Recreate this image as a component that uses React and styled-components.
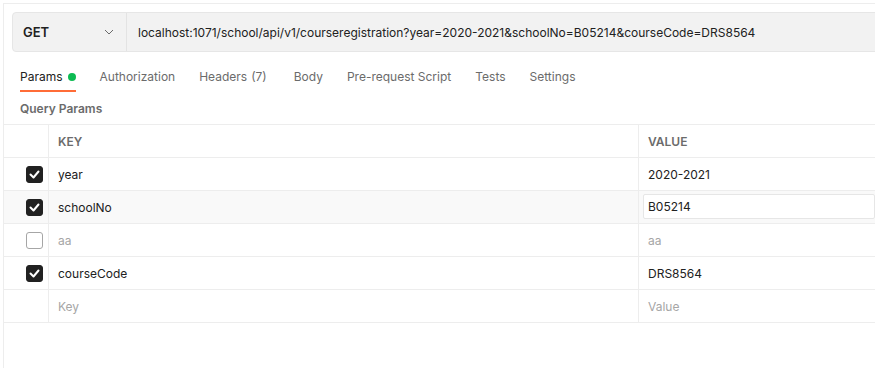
import React from "react";
import styled, { createGlobalStyle } from "styled-components";

const GlobalStyle = createGlobalStyle`
  html, body {
    margin: 0;
    padding: 0;
    background: #ffffff;
    overflow: hidden;
  }
  body {
    font-family: Inter, "Noto Sans", "Liberation Sans", sans-serif;
    color: #212121;
  }
`;

const Page = styled.div`
  padding: 3px 0 0 3px;
  height: 365px;
`;

const Panel = styled.div`
  border-top: 1px solid #ededed;
  border-left: 1px solid #ededed;
  height: 100%;
  box-sizing: border-box;
`;

const UrlRow = styled.div`
  padding: 8px 0 0 8px;
`;

const UrlBar = styled.div`
  display: flex;
  height: 40px;
  margin-right: -20px;
  background: #f2f2f2;
  border: 1px solid #e6e6e6;
  border-radius: 4px;
  box-sizing: border-box;
`;

const Method = styled.div`
  width: 114px;
  display: flex;
  align-items: center;
  justify-content: space-between;
  padding: 0 12px 0 10px;
  box-sizing: border-box;
  border-right: 1px solid #e3e3e3;
  font-weight: 600;
  font-size: 13px;
`;

const Url = styled.div`
  flex: 1;
  display: flex;
  align-items: center;
  padding-left: 11px;
  font-size: 12px;
  color: #212121;
  white-space: nowrap;
`;

const Tabs = styled.div`
  display: flex;
  gap: 24px;
  padding: 0 0 0 16px;
  margin-top: 11px;
`;

const Tab = styled.div`
  position: relative;
  display: flex;
  align-items: center;
  gap: 5px;
  height: 27px;
  font-size: 12px;
  color: ${(p) => (p.$active ? "#212121" : "#6b6b6b")};
  &::after {
    content: "";
    display: ${(p) => (p.$active ? "block" : "none")};
    position: absolute;
    left: 0;
    right: 0;
    bottom: -2px;
    height: 2px;
    background: #ff6c37;
  }
`;

const Count = styled.span`
  margin-left: -1px;
  margin-right: 3px;
`;

const Dot = styled.span`
  width: 8px;
  height: 8px;
  border-radius: 50%;
  background: #0cbb52;
`;

const SectionTitle = styled.div`
  padding: 0 0 0 16px;
  margin-top: 9px;
  height: 20px;
  line-height: 20px;
  font-size: 12px;
  font-weight: 600;
  color: #6b6b6b;
`;

const Table = styled.div`
  margin-top: 5px;
  border-top: 1px solid #ededed;
`;

const Row = styled.div`
  display: grid;
  grid-template-columns: 44px 590px 1fr;
  height: 33px;
  box-sizing: border-box;
  border-bottom: 1px solid #ededed;
  background: ${(p) => (p.$hover ? "#f9f9f9" : "#ffffff")};
`;

const Cell = styled.div`
  display: flex;
  align-items: center;
  padding-left: 9px;
  border-left: 1px solid #ededed;
  font-size: 12px;
  font-weight: ${(p) => (p.$head ? 600 : 400)};
  color: ${(p) => (p.$head ? "#6b6b6b" : p.$muted ? "#a6a6a6" : "#212121")};
  min-width: 0;
  white-space: nowrap;
`;

const CheckCell = styled.div`
  display: flex;
  align-items: center;
  justify-content: flex-end;
  padding-right: 5px;
`;

const Box = styled.span`
  width: 17px;
  height: 17px;
  box-sizing: border-box;
  border-radius: 3px;
  display: flex;
  align-items: center;
  justify-content: center;
  background: ${(p) => (p.$checked ? "#212121" : "#ffffff")};
  border: 1px solid ${(p) => (p.$checked ? "#212121" : "#a6a6a6")};
`;

const Input = styled.div`
  flex: 1;
  align-self: stretch;
  margin: 3px 0 4px -5px;
  padding-left: 4px;
  display: flex;
  align-items: center;
  background: #ffffff;
  border: 1px solid #e6e6e6;
  border-radius: 2px;
`;

const Chevron = () => (
  <svg width="10" height="6" viewBox="0 0 10 6" fill="none">
    <path d="M1 1l4 4 4-4" stroke="#6b6b6b" strokeWidth="1" />
  </svg>
);

const Check = () => (
  <svg width="11" height="9" viewBox="0 0 11 9" fill="none">
    <path d="M1.5 4.5l3 3 5-6" stroke="#ffffff" strokeWidth="2" strokeLinecap="round" strokeLinejoin="round" />
  </svg>
);

const CheckBox = ({ checked }) => (
  <Box $checked={checked}>{checked && <Check />}</Box>
);

const params = [
  { key: "year", value: "2020-2021", checked: true },
  { key: "schoolNo", value: "B05214", checked: true, hover: true },
  { key: "aa", value: "aa", checked: false },
  { key: "courseCode", value: "DRS8564", checked: true },
];

const tabs = ["Params", "Authorization", "Headers", "Body", "Pre-request Script", "Tests", "Settings"];

export default function App() {
  return (
    <>
      <GlobalStyle />
      <Page>
        <Panel>
          <UrlRow>
            <UrlBar>
              <Method>
                GET
                <Chevron />
              </Method>
              <Url>
                localhost:1071/school/api/v1/courseregistration?year=2020-2021&amp;schoolNo=B05214&amp;courseCode=DRS8564
              </Url>
            </UrlBar>
          </UrlRow>
          <Tabs>
            {tabs.map((t) => (
              <Tab key={t} $active={t === "Params"}>
                {t}
                {t === "Params" && <Dot />}
                {t === "Headers" && <Count>(7)</Count>}
              </Tab>
            ))}
          </Tabs>
          <SectionTitle>Query Params</SectionTitle>
          <Table>
            <Row>
              <CheckCell />
              <Cell $head>KEY</Cell>
              <Cell $head>VALUE</Cell>
            </Row>
            {params.map((p) => (
              <Row key={p.key} $hover={p.hover}>
                <CheckCell>
                  <CheckBox checked={p.checked} />
                </CheckCell>
                <Cell $muted={!p.checked}>{p.key}</Cell>
                <Cell $muted={!p.checked}>
                  {p.hover ? <Input>{p.value}</Input> : p.value}
                </Cell>
              </Row>
            ))}
            <Row>
              <CheckCell />
              <Cell $muted>Key</Cell>
              <Cell $muted>Value</Cell>
            </Row>
          </Table>
        </Panel>
      </Page>
    </>
  );
}
